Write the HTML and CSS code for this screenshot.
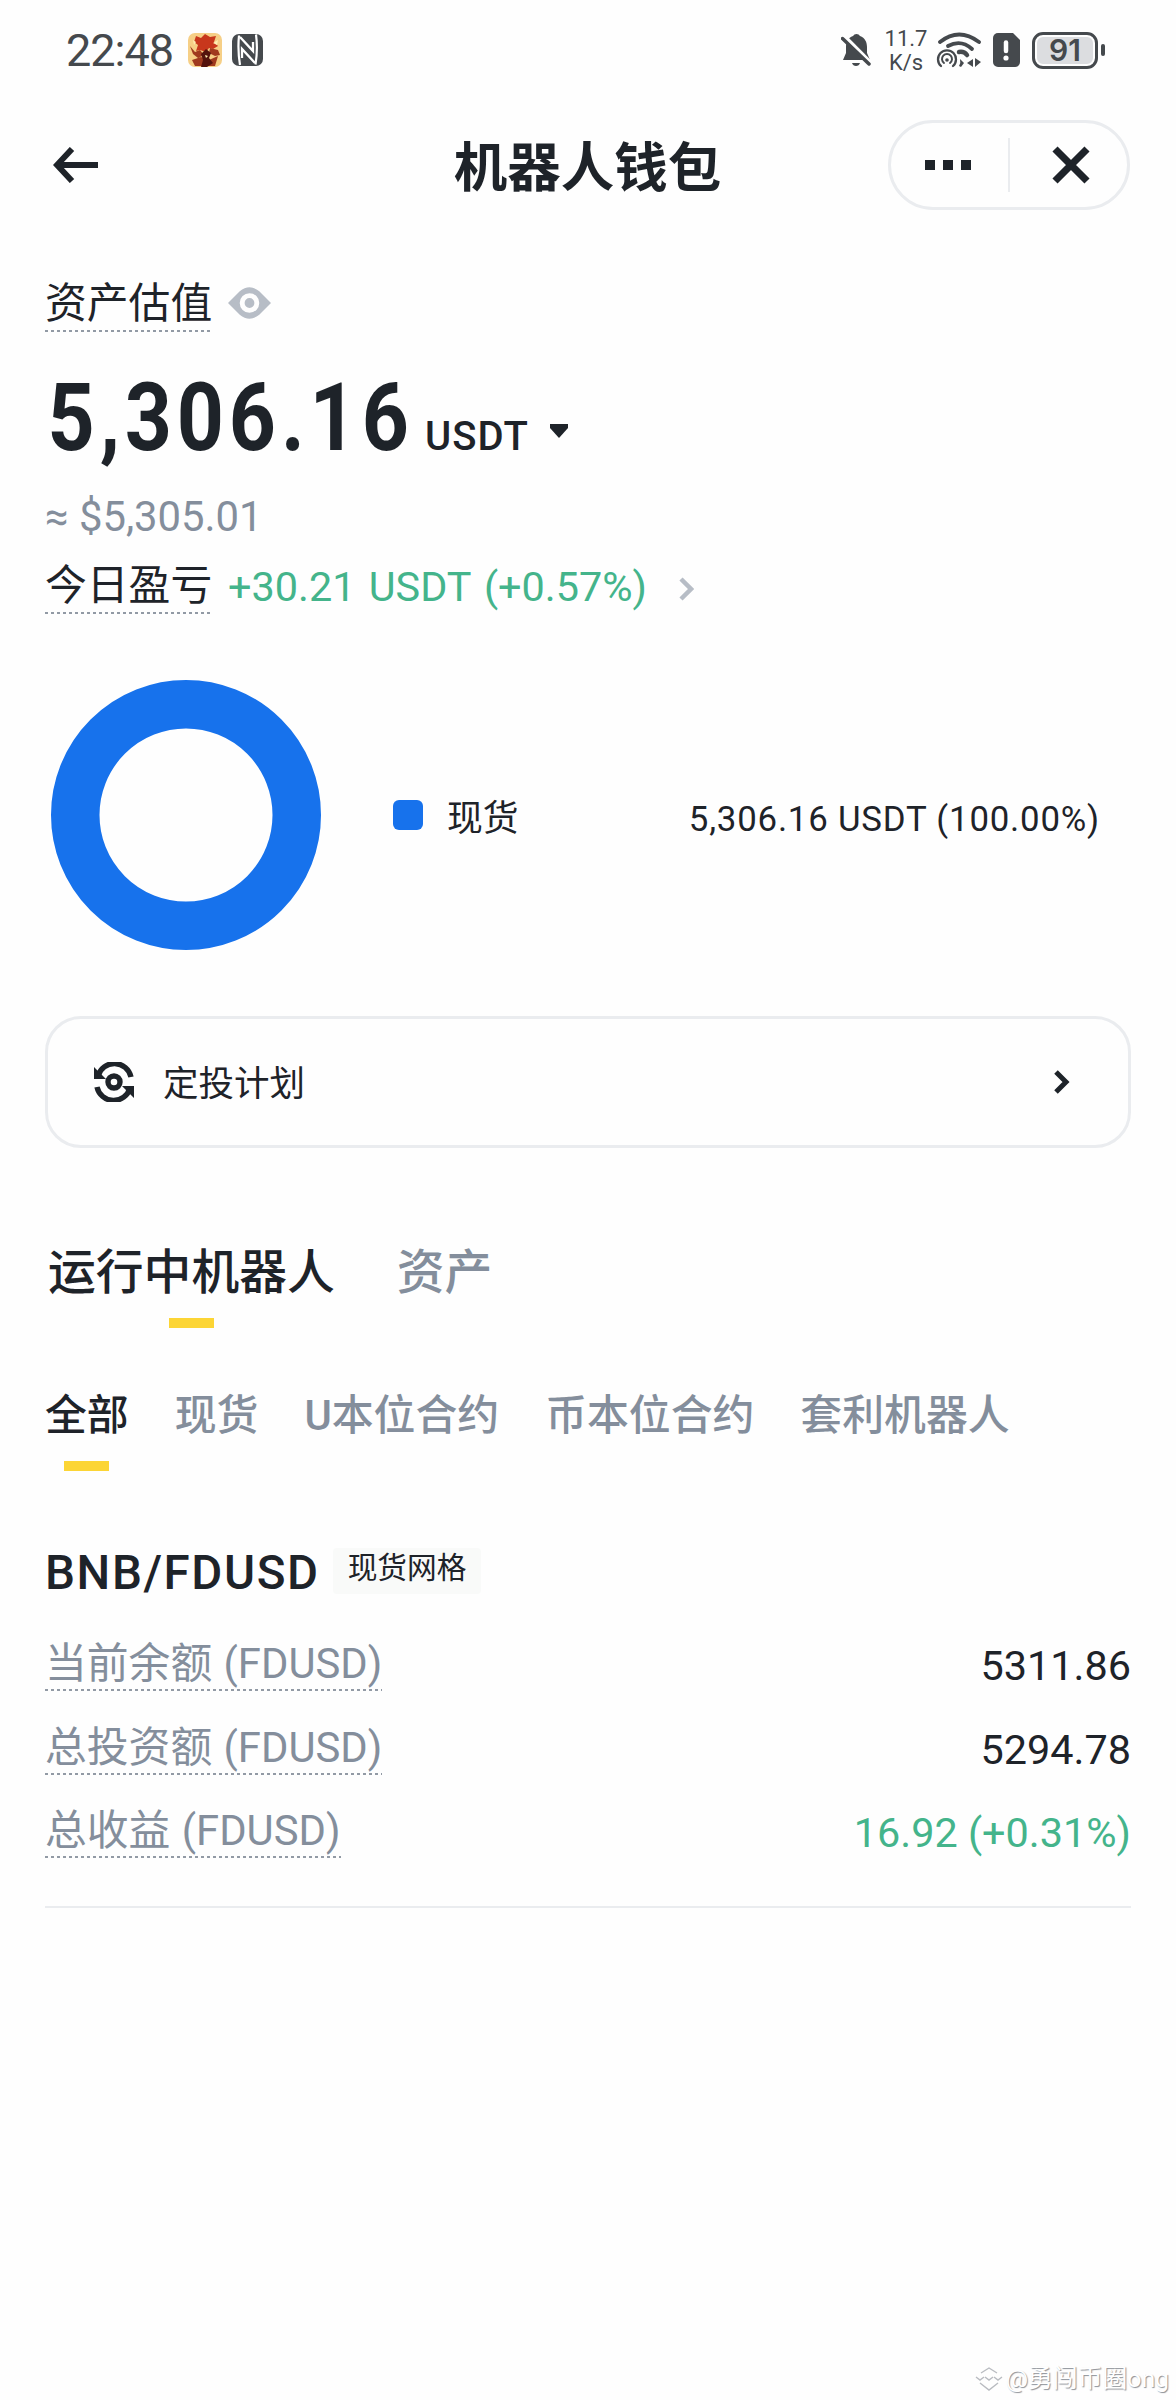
FILE: index.html
```html
<!DOCTYPE html>
<html lang="zh-CN">
<head>
<meta charset="utf-8">
<title>机器人钱包</title>
<link rel="stylesheet" href="styles.css">
</head>
<body>
<main class="screen">
  <div class="status">
    <span class="clock">22:48</span>
    <svg class="app-badge" width="34" height="34" viewBox="0 0 34 34">
      <rect width="34" height="34" rx="7" fill="#f6cf86"/>
      <path d="M8 3l5 2 4-4 5 3 6-1-2 6 4 4-5 3-4-1-3 4-6-2-4 1 2-6-4-3z" fill="#c8371c"/>
      <path d="M2 13l5 6 5-2 4 5-6 3-5-4zM22 15l8 2 2 5-5 1-6-3zM4 27l9-3 8 3 9-4-3 10H7z" fill="#a03a1e"/>
      <path d="M13 21l5-5 5 4-2 5 4 5-6 4h-6l2-7z" fill="#54130d"/>
      <path d="M5 7l3 2-2 3zM25 10l5-3-1 5zM17 22l3 1-2 2z" fill="#ffeeb2"/>
    </svg>
    <svg class="nfc" width="31" height="32" viewBox="0 0 31 32">
      <rect width="31" height="32" rx="7" fill="#45494d"/>
      <path d="M7 1.500Q5.500 16 8 31M24 .5q2 15-.5 30" fill="none" stroke="#fff" stroke-width="2.200"/>
      <path d="M8 3l13 14V8M23 29L10 15v9" fill="none" stroke="#fff" stroke-width="2.300"/>
    </svg>
    <span class="grow"></span>
    <svg class="bell" width="30" height="34" viewBox="0 0 30 34">
      <path d="M12 3a4 4 0 0 1 7 0c5 2 7 6 7 11v6l3 7H2l3-7v-6c0-5 2-9 7-11z" fill="#45494d"/>
      <path d="M11 30h8q-1 3-4 3t-4-3z" fill="#45494d"/>
      <path d="M3 3l27 27" stroke="#fff" stroke-width="4"/>
      <path d="M1.500 5.500L28 31" stroke="#45494d" stroke-width="3.500" stroke-linecap="round"/>
    </svg>
    <span class="speed"><span>11.7</span><span>K/s</span></span>
    <svg class="wifi" width="46" height="36" viewBox="0 0 46 36">
      <g fill="none" stroke="#45494d" stroke-linecap="round">
        <path d="M4 10Q23-5 43 10" stroke-width="3.800"/>
        <path d="M12 14q13-7 24 3" stroke-width="3.800"/>
        <path d="M23 20q5-1 8 3" stroke-width="4.500"/>
        <path d="M5 34A9 9 0 1 1 17 34" stroke-width="2.300"/>
        <path d="M8 31A5 5 0 1 1 14 31" stroke-width="2"/>
      </g>
      <circle cx="11" cy="28" r="1.800" fill="#45494d"/>
      <path d="M24 27l4 4-3 4-2-1q2-3 1-7zM37 27v8l-6-4zM39 26l6 4-6 5z" fill="#45494d"/>
    </svg>
    <svg class="sim" width="27" height="34" viewBox="0 0 27 34">
      <path d="M5 0h15l7 7v22a5 5 0 0 1-5 5H5a5 5 0 0 1-5-5V5a5 5 0 0 1 5-5z" fill="#45494d"/>
      <path d="M13 9.500v8.500" stroke="#fff" stroke-width="4.500" stroke-linecap="round"/><circle cx="13" cy="25" r="2.600" fill="#fff"/>
    </svg>
    <span class="battery">91</span><span class="nub"></span>
  </div>

  <header class="nav">
    <svg width="45" height="36" viewBox="0 0 45 36"><path d="M19 2L4 18l15 16M4 18h41" fill="none" stroke="#1e2329" stroke-width="6"/></svg>
    <h1>机器人钱包</h1>
    <div class="capsule">
      <svg width="46" height="10" viewBox="0 0 46 10"><path d="M0 0h10v10H0zM18 0h10v10H18zM36 0h10v10H36z" fill="#1e2329"/></svg>
      <i></i>
      <svg width="38" height="38" viewBox="0 0 38 38"><path d="M3 3l32 32M35 3L3 35" stroke="#1e2329" stroke-width="7.200"/></svg>
    </div>
  </header>

  <section class="summary">
    <div class="est"><span class="hint">资产估值</span>
      <svg width="43" height="32" viewBox="0 0 44 32"><path fill-rule="evenodd" d="M0 16L12 4Q22-4 32 4L44 16 32 28Q22 36 12 28zM22 6a10 10 0 1 0 0 20 10 10 0 0 0 0-20zm0 5a5 5 0 1 1 0 10 5 5 0 0 1 0-10z" fill="#b7bdc6"/></svg>
    </div>
    <div class="total"><span class="amount">5,306.16</span><span class="unit">USDT</span>
      <svg width="18" height="14" viewBox="0 0 18 14"><path d="M0 0h18v4L9 14 0 4z" fill="#1e2329"/></svg>
    </div>
    <div class="fiat">≈ $5,305.01</div>
    <div class="pnl"><span class="hint">今日盈亏</span><span class="gain">+30.21 USDT (+0.57%)</span>
      <svg width="15" height="24" viewBox="0 0 15 24"><path d="M2 2l10 10L2 22" fill="none" stroke="#b7bdc6" stroke-width="4.500"/></svg>
    </div>
  </section>

  <section class="allocation">
    <svg width="270" height="270" viewBox="0 0 270 270"><circle cx="135" cy="135" r="110.750" fill="none" stroke="#1772ec" stroke-width="48.500"/></svg>
    <i class="swatch"></i><span>现货</span><span class="share">5,306.16 USDT (100.00%)</span>
  </section>

  <section class="plan">
    <svg width="42" height="40" viewBox="0 0 42 40">
      <g fill="none" stroke="#1e2329" stroke-width="5.400"><path d="M5 14A17 17 0 0 1 38 15"/><path d="M37 26A17 17 0 0 1 4 25"/><circle cx="21" cy="20" r="6"/></g>
      <path d="M1 5v12h12zM41 36V24H29z" fill="#1e2329"/>
    </svg>
    <span>定投计划</span>
    <svg width="17" height="24" viewBox="0 0 17 24"><path d="M3 2l10 10L3 22" fill="none" stroke="#1e2329" stroke-width="5"/></svg>
  </section>

  <nav class="tabs"><a class="active">运行中机器人</a><a>资产</a></nav>
  <nav class="tabs sub"><a class="active">全部</a><a>现货</a><a>U本位合约</a><a>币本位合约</a><a>套利机器人</a></nav>

  <section class="bot">
    <div class="pair"><h2>BNB/FDUSD</h2><span class="tag">现货网格</span></div>
    <div class="row"><span class="hint">当前余额 (FDUSD)</span><span class="num">5311.86</span></div>
    <div class="row"><span class="hint">总投资额 (FDUSD)</span><span class="num">5294.78</span></div>
    <div class="row"><span class="hint">总收益 (FDUSD)</span><span class="num up">16.92 (+0.31%)</span></div>
  </section>

  <footer class="mark">
    <svg width="28" height="24" viewBox="0 0 28 24"><path d="M6 6l8-5 8 5M1 10l4 3 4-3M10 10l4 3 4-3M19 10l4 3 4-3M5 16l9 7 9-7" fill="none" stroke="#b9bcc1" stroke-width="1.400"/></svg>
    <span>@勇闯币圈ong</span>
  </footer>
</main>
</body>
</html>
```
FILE: styles.css
```css
* { box-sizing: border-box; margin: 0; padding: 0; }
body { background: #fefefe; color: #1e2329; font-family: Roboto, "Noto Sans CJK SC", sans-serif; font-size: 41.800px; }
svg { display: block; flex: none; }
span, h1, h2, a { white-space: nowrap; }
.screen { width: 1176px; height: 2400px; display: flex; flex-direction: column; overflow: hidden; }

.status { height: 100px; padding: 0 71px 0 66px; display: flex; align-items: center; color: #45494d; }
.clock { font-size: 45px; letter-spacing: -1px; width: 122px; }
.nfc { margin-left: 10px; }
.grow { flex: 1; }
.speed { display: flex; flex-direction: column; align-items: center; gap: 1px; width: 44px; margin: 0 8px 0 13px; font-size: 22px; line-height: 23px; }
.sim { margin: 0 12px 0 11px; }
.battery { width: 66px; height: 37px; border: 3px solid #45494d; border-radius: 11px; background: #dcdde0; box-shadow: inset 0 0 0 2px #fefefe; font: 600 30px/31px Inter, sans-serif; text-align: center; }
.nub { width: 4px; height: 12px; margin-left: 3px; border-radius: 2px; background: #45494d; }

.nav { height: 130px; padding: 0 46px 0 53px; display: grid; grid-template-columns: 242px 1fr 242px; align-items: center; }
.nav h1 { font-size: 53.500px; font-weight: 600; line-height: 70px; text-align: center; padding: 8px 8px 0 0; }
.capsule { height: 90px; border: 3px solid #eaecef; border-radius: 45px; display: flex; align-items: center; justify-content: space-between; padding: 0 37px 0 34px; }
.capsule i { width: 2px; height: 54px; background: #eaecef; margin-left: -6px; }

.summary { padding: 44px 45px 0; }
.hint { display: inline-block; background: repeating-linear-gradient(90deg, #929aa5 0 3px, transparent 3px 6px) left bottom / 100% 2px no-repeat; }
.est { display: flex; height: 59px; }
.est .hint { line-height: 60px; height: 58px; }
.est svg { margin: 13px 0 0 16px; }
.total { display: flex; align-items: baseline; height: 146px; padding-top: 30px; }
.amount { width: 380px; font-size: 94.500px; font-weight: 700; line-height: 110px; letter-spacing: 5.600px; transform: scaleX(.87); transform-origin: left; padding-left: 3px; }
.unit { font-size: 40px; font-weight: 500; width: 125px; letter-spacing: 1px; }
.total svg { align-self: flex-start; margin-top: 61px; }
.fiat { color: #848e9c; height: 70px; line-height: 76px; }
.pnl { display: flex; height: 68px; }
.pnl .hint { line-height: 74px; height: 65px; width: 166px; }
.gain { color: #44b48b; margin-left: 17px; line-height: 76px; width: 452px; font-size: 41.400px; word-spacing: 3px; }
.pnl svg { margin: 28px 0 0 -1px; }

.allocation { height: 270px; margin: 63px 76px 0 51px; display: flex; align-items: center; font-size: 35.800px; }
.swatch { width: 30px; height: 30px; border-radius: 6px; background: #1772ec; margin: 0 24px 0 72px; }
.share { margin-left: auto; font-size: 34.800px; letter-spacing: .8px; padding-top: 7px; }

.plan { height: 132px; margin: 66px 45px 0; padding: 0 58px 0 45px; border: 3px solid #eaecef; border-radius: 36px; display: flex; align-items: center; font-size: 35.500px; }
.plan span { flex: 1; margin-left: 28px; padding-bottom: 4px; }

.tabs { display: flex; gap: 62px; margin: 80px 0 0 48px; height: 100px; font-size: 47.800px; font-weight: 500; color: #848e9c; line-height: 90px; }
.tabs a { display: flex; flex-direction: column; align-items: center; height: 100px; }
.active { color: #1e2329; }
.active::after { content: ""; width: 45px; height: 10px; background: #fcd535; }
.sub { margin: 43px 0 0 45px; gap: 46px; font-size: 41.850px; }

.bot { margin: 61px 45px 0; padding-top: 8px; height: 376px; border-bottom: 2px solid #eaecef; }
.pair { display: flex; height: 90px; }
.pair h2 { font-size: 47.500px; font-weight: 500; line-height: 67px; width: 288px; letter-spacing: 1.600px; }
.tag { width: 148px; height: 46px; margin-top: 8px; border-radius: 4px; background: #f9faf9; font-size: 29.700px; line-height: 40px; text-align: center; }
.row { display: flex; justify-content: space-between; height: 83.500px; }
.row .hint { color: #848e9c; line-height: 67px; height: 61px; word-spacing: 1px; }
.num { line-height: 73px; font-size: 41.400px; }
.up { color: #44b48b; }

.mark { margin: auto 7px 6px auto; display: flex; align-items: center; gap: 3px; font-size: 24.800px; line-height: 30px; color: #fff; text-shadow: 1px 1px 1px #8d9197; }
```
